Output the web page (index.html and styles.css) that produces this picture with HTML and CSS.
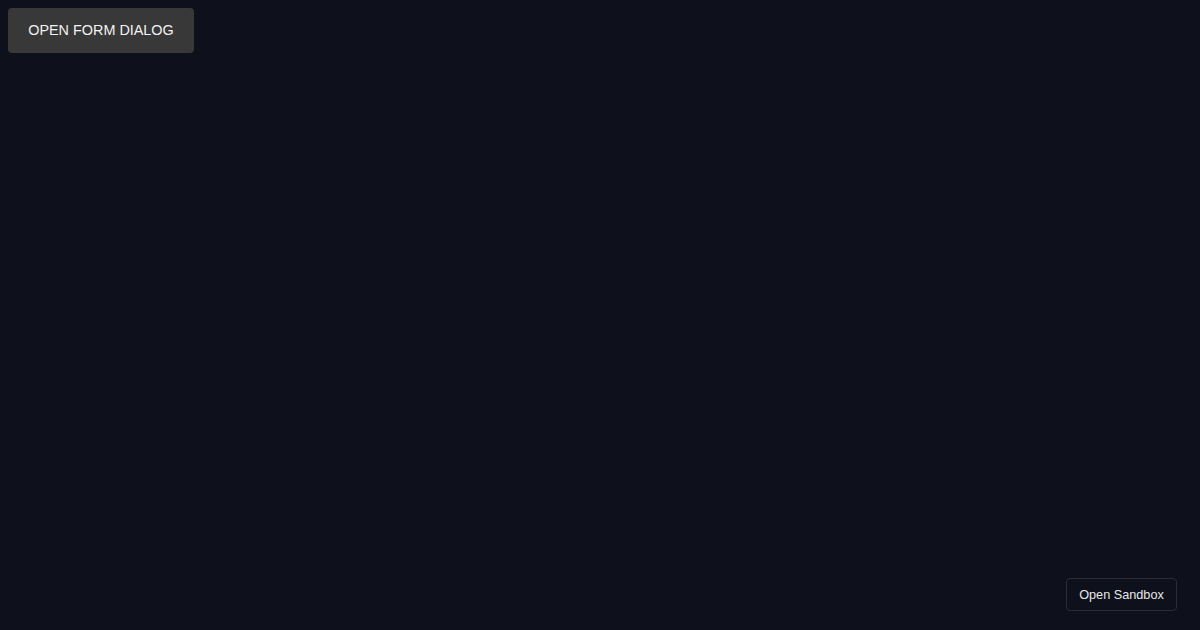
FILE: index.html
```html
<!DOCTYPE html>
<html>
<head>
<meta charset="utf-8">
<link rel="stylesheet" href="styles.css">
</head>
<body>
<button class="open-btn">OPEN FORM DIALOG</button>
<button class="sandbox-btn">Open Sandbox</button>
</body>
</html>
```
FILE: styles.css
```css
html, body {
  margin: 0;
  height: 100%;
  background: #0e101b;
}
body {
  padding: 8px;
  box-sizing: border-box;
  font-family: "Liberation Sans", Arial, sans-serif;
}
.open-btn {
  display: block;
  width: 186px;
  height: 45px;
  padding: 0 0 1px;
  background: #383838;
  color: #f2f2f2;
  border: none;
  border-radius: 4px;
  font-family: "Liberation Sans", Arial, sans-serif;
  font-size: 14.4px;
  text-align: center;
}
.sandbox-btn {
  position: fixed;
  right: 23px;
  bottom: 19px;
  width: 111px;
  height: 33px;
  padding: 0;
  background: #0e101b;
  color: #e8e8e8;
  border: 1px solid #2b2d35;
  border-radius: 4px;
  font-family: "Liberation Sans", Arial, sans-serif;
  font-size: 12.7px;
  text-align: center;
}
```
